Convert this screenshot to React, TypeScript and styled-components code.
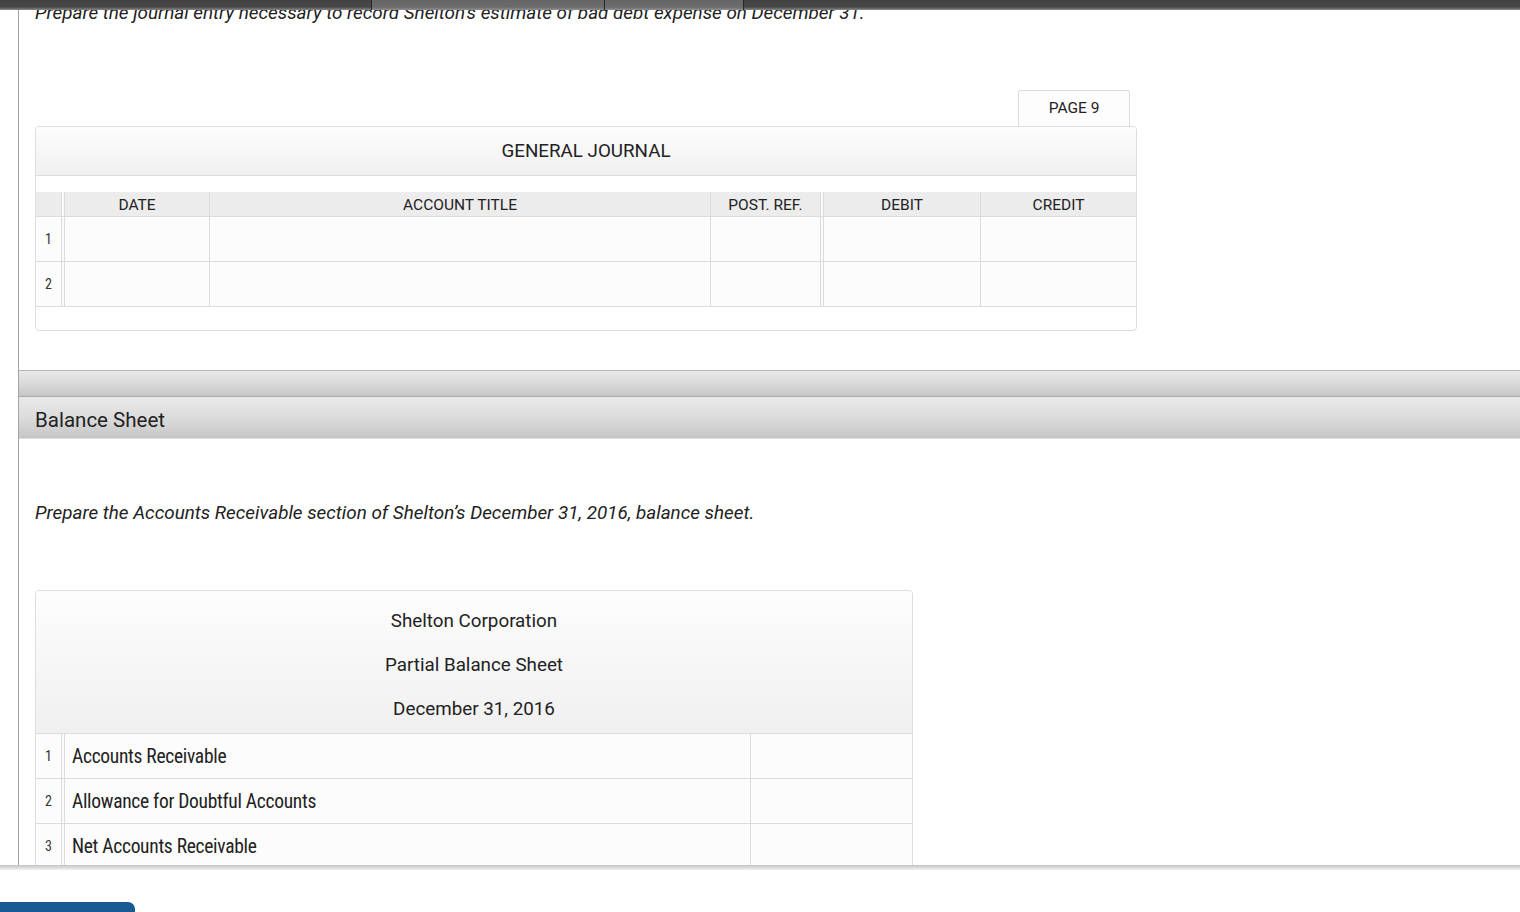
import React from "react";
import styled, { createGlobalStyle } from "styled-components";

const Global = createGlobalStyle`
  html, body { margin: 0; padding: 0; background: #ffffff; overflow: hidden; }
  body { font-family: Roboto, "Liberation Sans", Arial, sans-serif; color: #222; }
  * { box-sizing: border-box; }
`;

const Page = styled.div`
  width: 1520px;
  height: 912px;
  display: flex;
  flex-direction: column;
  overflow: hidden;
`;

const TopBar = styled.div`
  height: 10px;
  flex: none;
  display: flex;
  background: linear-gradient(#434343 0%, #484848 70%, #8a8a8a 100%);
`;

const TopSpacer = styled.div<{ $w: number }>`
  width: ${(p) => p.$w}px;
  flex: none;
`;

const TopTab = styled.div<{ $w: number }>`
  width: ${(p) => p.$w}px;
  flex: none;
  border-left: 1px solid #262626;
  background: linear-gradient(#666 0%, #6c6c6c 70%, #909090 100%);
`;

const TopRest = styled.div`
  flex: 1;
  border-left: 1px solid #262626;
`;

const Body = styled.div`
  flex: 1;
  display: flex;
  overflow: hidden;
`;

const Gutter = styled.div`
  width: 18px;
  flex: none;
`;

const Main = styled.main`
  flex: 1;
  border-left: 1px solid #a3a3a3;
  display: flex;
  flex-direction: column;
  overflow: hidden;
`;

const Instruction = styled.p<{ $top: number }>`
  margin: ${(p) => p.$top}px 0 0 0;
  padding-left: 16px;
  font-style: italic;
  font-size: 18.85px;
  line-height: 22px;
  color: #222;
  white-space: nowrap;
`;

const JournalWrap = styled.section`
  margin: 66px 0 0 16px;
  width: 1102px;
  display: flex;
  flex-direction: column;
`;

const PageTab = styled.div`
  align-self: flex-end;
  margin-right: 7px;
  width: 112px;
  height: 36px;
  padding-bottom: 2px;
  border: 1px solid #dcdcdc;
  border-bottom: none;
  border-radius: 3px 3px 0 0;
  background: #fdfdfd;
  font-size: 15.5px;
  display: flex;
  align-items: center;
  justify-content: center;
  color: #222;
`;

const Box = styled.div<{ $w: number; $top: number }>`
  width: ${(p) => p.$w}px;
  margin-top: ${(p) => p.$top}px;
  border: 1px solid #dddddd;
  border-radius: 4px;
  background: #ffffff;
  overflow: hidden;
`;

const BoxHeader = styled.div<{ $h: number }>`
  height: ${(p) => p.$h}px;
  border-bottom: 1px solid #dcdcdc;
  background: linear-gradient(#fdfdfd 0%, #f0f0f0 100%);
  display: flex;
  flex-direction: column;
  align-items: center;
  justify-content: center;
  font-size: 18.8px;
  color: #222;
`;

const BalHeader = styled.div`
  padding: 8px 0 2px;
  border-bottom: 1px solid #dcdcdc;
  background: linear-gradient(#fdfdfd 0%, #f0f0f0 100%);
  display: flex;
  flex-direction: column;
  align-items: center;
`;

const HeaderLine = styled.div`
  height: 44px;
  line-height: 44px;
  font-size: 18.8px;
  color: #222;
`;

const Spacer = styled.div<{ $h: number }>`
  height: ${(p) => p.$h}px;
`;

const Grid = styled.div<{ $cols: string; $h: number }>`
  display: grid;
  grid-template-columns: ${(p) => p.$cols};
  height: ${(p) => p.$h}px;
`;

const Cell = styled.div<{ $head?: boolean; $left?: boolean; $right?: boolean; $gap?: boolean }>`
  border-bottom: 1px solid #dcdcdc;
  border-left: ${(p) => (p.$left ? "1px solid #dcdcdc" : "none")};
  border-right: ${(p) => (p.$right ? "1px solid #dcdcdc" : "none")};
  background: ${(p) => (p.$gap ? "#fafafa" : p.$head ? "#ececec" : "#fcfcfc")};
  display: flex;
  align-items: center;
  justify-content: center;
  padding-top: ${(p) => (p.$head ? "2px" : "0")};
  font-size: 15.5px;
  color: #222;
  text-transform: uppercase;
  white-space: nowrap;
`;

const NumCell = styled(Cell)`
  font-family: Roboto, sans-serif;
  font-stretch: 75%;
  font-size: 14px;
  color: #333;
`;

const LabelCell = styled(Cell)`
  justify-content: flex-start;
  padding-left: 7px;
  font-family: Roboto, sans-serif;
  font-stretch: 75%;
  font-size: 19.5px;
  letter-spacing: -0.3px;
  text-transform: none;
  color: #222;
`;

const SectionBar = styled.div`
  margin-top: 39px;
  border-top: 1px solid #b9b9b9;
`;

const SectionStrip = styled.div`
  height: 26px;
  border-bottom: 1px solid #a9a9a9;
  background: linear-gradient(#e8e8e8 0%, #dadada 50%, #c6c6c6 100%);
`;

const SectionTitle = styled.h2`
  margin: 0;
  height: 42px;
  padding: 5px 0 0 16px;
  border-bottom: 1px solid #dddddd;
  background: linear-gradient(#e9e9e9 0%, #dcdcdc 50%, #c6c6c6 100%);
  display: flex;
  align-items: center;
  font-size: 20.5px;
  font-weight: 400;
  color: #222;
`;

const BalanceWrap = styled.section`
  margin-left: 16px;
`;

const BottomShadow = styled.div`
  height: 5px;
  flex: none;
  background: linear-gradient(#c4c4c4 0%, #dadada 50%, #f2f2f2 100%);
`;

const Footer = styled.div`
  height: 42px;
  flex: none;
  display: flex;
  align-items: flex-end;
`;

const FooterButton = styled.div`
  width: 135px;
  height: 10px;
  background: #195a94;
  border-radius: 0 7px 0 0;
`;

const JCOLS = "26px 2px 146px 501px 110px 2px 158px 155px";
const BCOLS = "26px 2px 687px 161px";

const JournalRow: React.FC<{ n: number }> = ({ n }) => (
  <Grid $cols={JCOLS} $h={45}>
    <NumCell $right>{n}</NumCell>
    <Cell $gap />
    <Cell $left $right />
    <Cell $right />
    <Cell $right />
    <Cell $gap />
    <Cell $left $right />
    <Cell />
  </Grid>
);

const BalanceRow: React.FC<{ n: number; label: string }> = ({ n, label }) => (
  <Grid $cols={BCOLS} $h={45}>
    <NumCell $right>{n}</NumCell>
    <Cell $gap />
    <LabelCell $left $right>{label}</LabelCell>
    <Cell />
  </Grid>
);

export default function App() {
  return (
    <Page>
      <Global />
      <TopBar>
        <TopSpacer $w={371} />
        <TopTab $w={233} />
        <TopTab $w={139} />
        <TopRest />
      </TopBar>
      <Body>
        <Gutter />
        <Main>
          <Instruction $top={-8}>
            Prepare the journal entry necessary to record Shelton's estimate of bad debt expense on December 31.
          </Instruction>

          <JournalWrap>
            <PageTab>PAGE 9</PageTab>
            <Box $w={1102} $top={0}>
              <BoxHeader $h={49}>GENERAL JOURNAL</BoxHeader>
              <Spacer $h={16} />
              <Grid $cols={JCOLS} $h={25}>
                <Cell $head $right />
                <Cell $gap />
                <Cell $head $left $right>Date</Cell>
                <Cell $head $right>Account Title</Cell>
                <Cell $head $right>Post. Ref.</Cell>
                <Cell $gap />
                <Cell $head $left $right>Debit</Cell>
                <Cell $head>Credit</Cell>
              </Grid>
              <JournalRow n={1} />
              <JournalRow n={2} />
              <Spacer $h={23} />
            </Box>
          </JournalWrap>

          <SectionBar>
            <SectionStrip />
            <SectionTitle>Balance Sheet</SectionTitle>
          </SectionBar>

          <Instruction $top={63}>
            Prepare the Accounts Receivable section of Shelton’s December 31, 2016, balance sheet.
          </Instruction>

          <BalanceWrap>
            <Box $w={878} $top={66}>
              <BalHeader>
                <HeaderLine>Shelton Corporation</HeaderLine>
                <HeaderLine>Partial Balance Sheet</HeaderLine>
                <HeaderLine>December 31, 2016</HeaderLine>
              </BalHeader>
              <BalanceRow n={1} label="Accounts Receivable" />
              <BalanceRow n={2} label="Allowance for Doubtful Accounts" />
              <BalanceRow n={3} label="Net Accounts Receivable" />
            </Box>
          </BalanceWrap>
        </Main>
      </Body>
      <BottomShadow />
      <Footer>
        <FooterButton />
      </Footer>
    </Page>
  );
}
